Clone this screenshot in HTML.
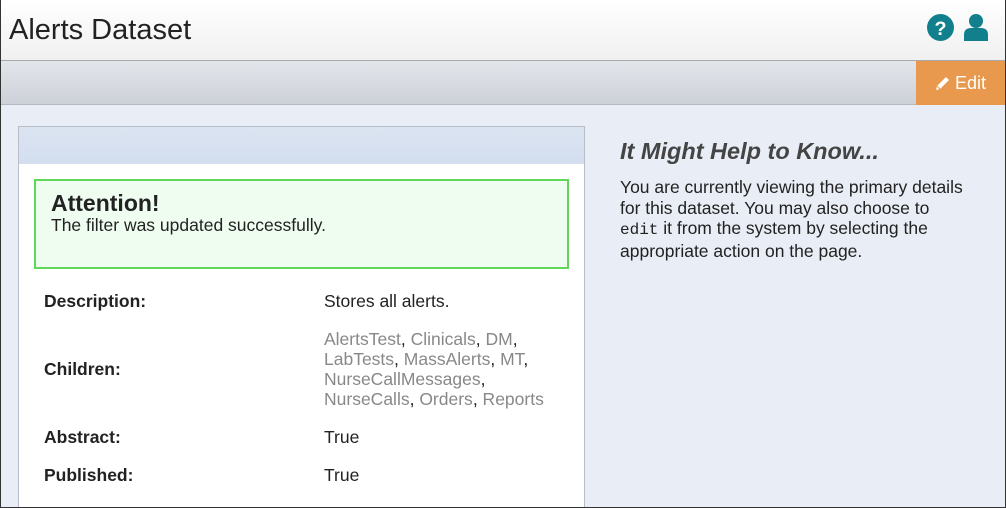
<!DOCTYPE html>
<html><head><style>
*{margin:0;padding:0;box-sizing:border-box}
html,body{width:1006px;height:508px;overflow:hidden}
body{font-family:"Liberation Sans",Arial,sans-serif;background:#e9edf5;position:relative;color:#222}
.frame{position:absolute;left:0;top:0;width:1006px;height:508px;border:1px solid #333;border-top:none;pointer-events:none;z-index:9}
.hdr{position:absolute;left:0;top:0;width:1006px;height:61px;background:linear-gradient(#fff,#f0f0f0);border-bottom:1px solid #aaa}
.hdr h1{position:absolute;left:9px;top:14px;font-size:29px;font-weight:normal;color:#222}
.bar{position:absolute;left:0;top:61px;width:1006px;height:44px;background:linear-gradient(#e2e5ea,#cdd1d8);border-bottom:1px solid #b5b9c0}
.edit{position:absolute;left:916px;top:61px;width:90px;height:44px;background:#e8994e;color:#fff;font-size:18px;line-height:44px;padding-left:19px}
.card{position:absolute;left:18px;top:126px;width:567px;height:390px;background:#fff;border:1px solid #b8bec8}
.ch{height:37px;background:linear-gradient(#dbe4f1,#d3deef)}
.alert{position:absolute;left:15px;top:52px;width:535px;height:90px;background:#effdf0;border:2px solid #5fd85a;padding:11px 15px}
.alert b{font-size:23px;display:block;line-height:23px}
.alert span{font-size:17.5px}
.lbl{position:absolute;left:25px;font-weight:bold;font-size:17.5px}
.val{position:absolute;left:305px;font-size:17.5px}
.gr{color:#888;line-height:20px}
.side{position:absolute;left:620px;top:138px;width:345px}
.side h2{font-size:23.5px;font-style:italic;font-weight:bold;color:#444;margin-bottom:12px}
.side p{font-size:17.5px;line-height:20.5px}
code{font-family:"Liberation Mono",monospace;font-size:16px}
</style></head><body>
<div class="hdr"><h1>Alerts Dataset</h1>
<svg style="position:absolute;left:927px;top:14px" width="27" height="27" viewBox="0 0 26 26"><circle cx="13" cy="13" r="13" fill="#127f8c"/><text x="13" y="20" text-anchor="middle" font-family="Liberation Sans" font-weight="bold" font-size="19" fill="#fff">?</text></svg>
<svg style="position:absolute;left:963px;top:13px" width="26" height="28" viewBox="0 0 26 28"><circle cx="13" cy="8" r="7" fill="#127f8c"/><path d="M1 28 V22 Q1 15 8 15 H18 Q25 15 25 22 V28 Z" fill="#127f8c"/></svg>
</div>
<div class="bar"></div>
<div class="edit"><svg width="16" height="16" viewBox="0 0 16 16" style="vertical-align:-2px;margin-right:4px"><path d="M1 15 L2 11 L11 2 L14 5 L5 14 Z" fill="#fff"/><path d="M2 11 L5 14" stroke="#e8994e" stroke-width="1"/></svg>Edit</div>
<div class="card"><div class="ch"></div>
<div class="alert"><b>Attention!</b><span>The filter was updated successfully.</span></div>
<div class="lbl" style="top:164px">Description:</div><div class="val" style="top:164px">Stores all alerts.</div>
<div class="lbl" style="top:232px">Children:</div>
<div class="val gr" style="top:202px">AlertsTest<span style="color:#222">,</span> Clinicals<span style="color:#222">,</span> DM<span style="color:#222">,</span><br>LabTests<span style="color:#222">,</span> MassAlerts<span style="color:#222">,</span> MT<span style="color:#222">,</span><br>NurseCallMessages<span style="color:#222">,</span><br>NurseCalls<span style="color:#222">,</span> Orders<span style="color:#222">,</span> Reports</div>
<div class="lbl" style="top:300px">Abstract:</div><div class="val" style="top:300px">True</div>
<div class="lbl" style="top:338px">Published:</div><div class="val" style="top:338px">True</div>
</div>
<div class="side"><h2>It Might Help to Know...</h2>
<p>You are currently viewing the primary details for this dataset. You may also choose to <code>edit</code> it from the system by selecting the appropriate action on the page.</p></div>
<div class="frame"></div>
</body></html>
